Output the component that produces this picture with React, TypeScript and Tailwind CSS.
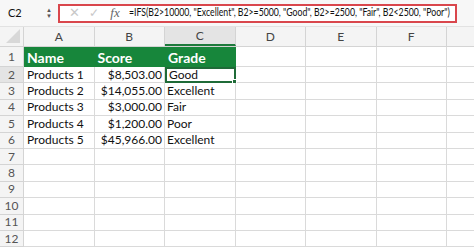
import React from 'react'

const cols = ['A', 'B', 'C', 'D', 'E', 'F', '']

const data = [
  ['Products 1', '$8,503.00', 'Good'],
  ['Products 2', '$14,055.00', 'Excellent'],
  ['Products 3', '$3,000.00', 'Fair'],
  ['Products 4', '$1,200.00', 'Poor'],
  ['Products 5', '$45,966.00', 'Excellent'],
]

const font = { fontFamily: 'Lato, "Open Sans", sans-serif' }

export default function App() {
  const rows = Array.from({ length: 11 }, (_, i) => i + 2)

  return (
    <div className="w-[474px] h-[248px] overflow-hidden bg-white text-[#111]" style={font}>
      {/* formula bar */}
      <div className="h-[27px] flex items-center bg-[#f7f7f7] border-b border-[#e2e2e2]">
        <div className="w-[58px] shrink-0 flex items-center justify-between pl-2 pr-1.5 text-[11px]">
          <span>C2</span>
          <span className="flex flex-col text-[6px] leading-[6px] text-[#555]">
            <span>▲</span>
            <span>▼</span>
          </span>
        </div>
        <div className="w-[399px] shrink-0 h-[19px] flex items-center border-2 border-[#d9464c] bg-white overflow-hidden">
          <span className="w-[20px] shrink-0 text-center text-[#c8c8c8] text-[13px] ml-[4px]">✕</span>
          <span className="w-[20px] shrink-0 text-center text-[#c8c8c8] text-[12px]">✓</span>
          <span className="w-[22px] shrink-0 text-center text-[#666] italic text-[13px]" style={{ fontFamily: '"Liberation Serif", serif' }}>
            fx
          </span>
          <span className="ml-[3px] text-[10.5px] whitespace-nowrap origin-left scale-x-[0.83] text-[#111]">
            =IFS(B2&gt;10000, "Excellent", B2&gt;=5000, "Good", B2&gt;=2500, "Fair", B2&lt;2500, "Poor")
          </span>
        </div>
      </div>

      {/* column headers */}
      <div className="flex h-[20px] bg-[#f4f4f4] border-b border-[#d4d4d4] text-[12px] text-[#444]">
        <div className="w-[24px] shrink-0 relative border-r border-[#d4d4d4]">
          <div className="absolute right-[3px] bottom-[3px] w-0 h-0 border-l-[14px] border-l-transparent border-b-[14px] border-b-[#d8d8d8]" />
        </div>
        {cols.map((c, i) => (
          <div
            key={i}
            className={`w-[70.5px] shrink-0 flex items-center justify-center border-r border-[#d4d4d4] ${c === 'C' ? 'bg-[#e4e4e4] border-b-2 border-b-[#1d7a3c]' : ''}`}
          >
            {c}
          </div>
        ))}
      </div>

      {/* row 1 */}
      <div className="flex h-[20px]">
        <div className="w-[24px] shrink-0 flex items-center justify-center bg-[#f4f4f4] border-r border-b border-[#d4d4d4] text-[12px] text-[#555]">1</div>
        {['Name', 'Score', 'Grade'].map((h) => (
          <div key={h} className="w-[70.5px] shrink-0 flex items-center px-[3px] bg-[#17863b] text-white font-bold text-[14px]">
            {h}
          </div>
        ))}
        {[0, 1, 2, 3].map((i) => (
          <div key={i} className="w-[70.5px] shrink-0 border-r border-b border-[#dadada]" />
        ))}
      </div>

      {rows.map((r) => {
        const d = data[r - 2]
        return (
          <div key={r} className="flex h-[16.4px]">
            <div className={`w-[24px] shrink-0 flex items-center justify-center border-r border-b border-[#d4d4d4] text-[12px] text-[#555] ${r === 2 ? 'bg-[#e4e4e4]' : 'bg-[#f4f4f4]'}`}>
              {r}
            </div>
            <div className="w-[70.5px] shrink-0 flex items-center px-[3px] border-r border-b border-[#dadada] text-[12px] whitespace-nowrap">{d?.[0]}</div>
            <div className="w-[70.5px] shrink-0 flex items-center justify-end px-[2px] border-r border-b border-[#dadada] text-[12px] whitespace-nowrap">{d?.[1]}</div>
            <div
              className={`w-[70.5px] shrink-0 flex items-center px-[2px] text-[12px] whitespace-nowrap relative ${r === 2 ? 'border-2 border-[#1f6b38]' : 'border-r border-b border-[#dadada]'}`}
            >
              {d?.[2]}
              {r === 2 && <div className="absolute -right-[3px] -bottom-[3px] w-[5px] h-[5px] bg-[#1f6b38] border border-white" />}
            </div>
            {[0, 1, 2, 3].map((i) => (
              <div key={i} className="w-[70.5px] shrink-0 border-r border-b border-[#dadada]" />
            ))}
          </div>
        )
      })}
    </div>
  )
}
